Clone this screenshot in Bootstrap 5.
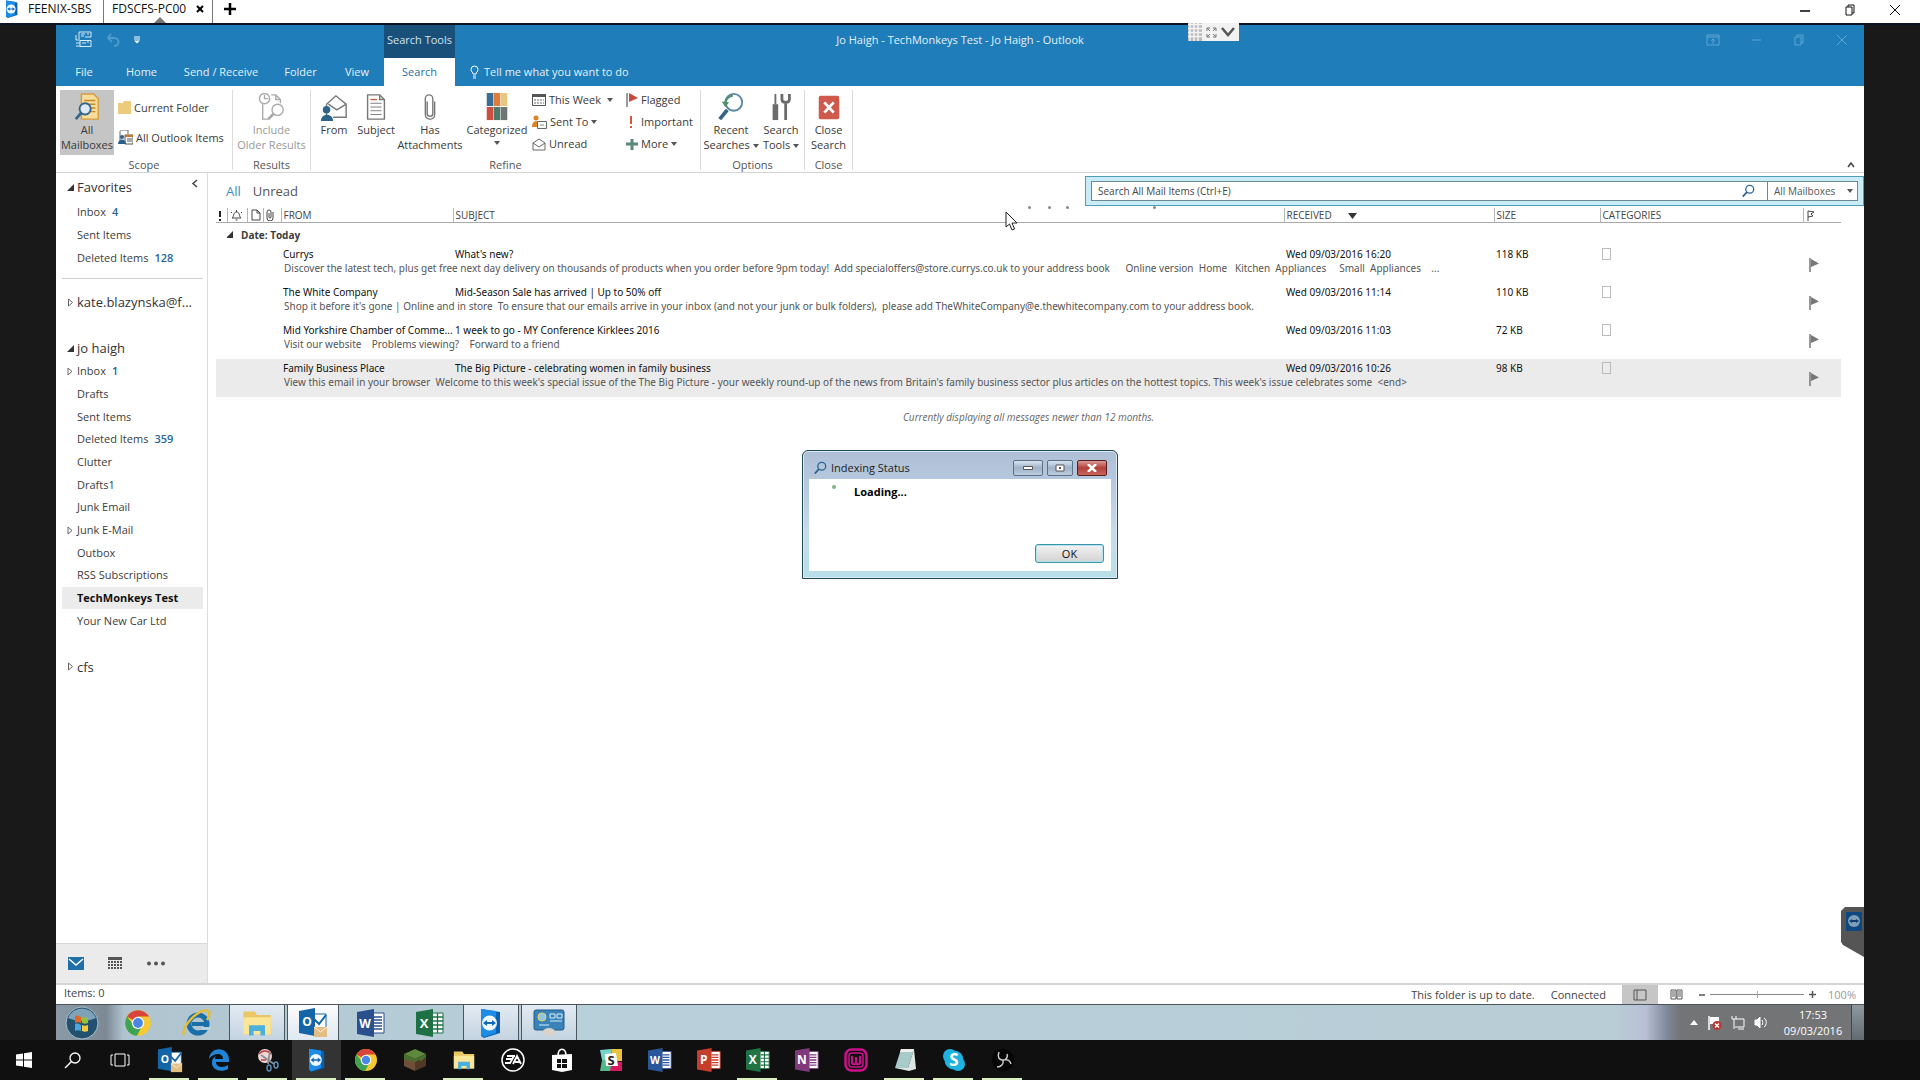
<!DOCTYPE html>
<html lang="en">
<head>
<meta charset="utf-8">
<meta name="viewport" content="width=device-width, initial-scale=1">
<title>Jo Haigh - TechMonkeys Test - Jo Haigh - Outlook</title>
<link href="https://cdn.jsdelivr.net/npm/bootstrap@5.3.0/dist/css/bootstrap.min.css" rel="stylesheet">
<script src="https://cdn.jsdelivr.net/npm/bootstrap@5.3.0/dist/js/bootstrap.bundle.min.js"></script>
<style>
:root{--ol:#1f7db9;--ink:#3c3c3c;--line:#d4d4d4}
body{font-family:"Open Sans","Noto Sans",sans-serif;font-size:11px;line-height:14px;color:var(--ink);background:#191919}
button,input,select{font:inherit;color:inherit}
button{background:none;border:0;padding:0}
a{color:inherit;text-decoration:none}
svg{display:block;flex:none}
.shell{min-height:100vh}
.tv-bar{height:23px;background:#fff;color:#111;font-size:12px}
.tv-bar .sess{height:23px;padding-bottom:5px}
.sess-a{width:103px}
.sess-b{width:110px;border-left:1px solid #777;border-right:1px solid #777}
.sess-b::after{content:"";position:absolute;left:50px;bottom:0;border:6px solid transparent;border-top:0;border-bottom-color:#777}
.tv-add{width:34px;height:23px;padding-bottom:5px}
.tv-win{gap:32px;padding:0 19px 3px 0}
.stage{padding:0 56px;border-top:2px solid #0c1324}
.tv-handle{left:1188px;top:23px;width:51px;height:18px;background:#f2f2f2;z-index:5}
.ol-head{background:var(--ol);color:#e4f1fa}
.ol-title{height:33px}
.side-l,.side-r{flex:1 1 0}
.ctx{width:71px;background:#195079;color:#cfe4f4}
.qat{width:328px;padding-left:19px;gap:14px}
.ol-ctl{gap:30px;color:#5fa5d2}
.ol-ctl button:last-child{margin-right:16px}
.tabs{height:28px}
.tabs a{display:flex;align-items:center;justify-content:center;height:28px}
.t-s{width:56px}.t-m{width:59px}.t-l{width:100px}.t-on{width:71px;background:#fff;color:#1f6fa8}
.t-v{width:54px}
.tell{padding-left:15px;gap:5px}
.rib{height:87px;border-bottom:1px solid var(--line);background:#fff;color:#3a3a3a}
.grp{margin:4px 0;border-right:1px solid #dcdcdc;height:80px}
.grp-cap{height:14px;line-height:14px;text-align:center;color:#555;margin-bottom:-2px}
.big{display:flex;flex-direction:column;align-items:center;height:65px;padding-top:3px;line-height:15px;text-align:center;white-space:nowrap}
.big svg{margin-bottom:1px}
.big.on{background:#c5c5c5}
.sm{display:flex;align-items:center;gap:3px;white-space:nowrap}
.side{width:152px;flex:none;border-right:1px solid #dcdcdc;padding:0 0 0 6px}
.fold-h{font-size:13px;line-height:20px;gap:3px;padding-left:5px;color:#333}
.fold-list{display:flex;flex-direction:column;margin:0;padding:0;list-style:none}
.fold-list li{flex:1 1 0;display:flex;align-items:center}
.fold-list a{display:flex;align-items:center;flex:1;padding-left:15px;height:100%}
.fold-list .tw + a{padding-left:3px}
.tw{width:12px;padding-left:5px;flex:none}
.cnt{color:#2b6496;font-weight:600;margin-left:6px}
.on-row{background:#ebebeb;margin-right:4px;font-weight:700;color:#111}
.fav3{height:68px}.jo12{height:272px}
.mods{height:40px;margin-left:-6px;border-top:1px solid #d8d8d8;background:#ebebeb;padding-left:12px}
.filt{font-size:13px;color:#555;height:35px;padding-left:18px;gap:12px}
.sbox{width:779px;height:30px;margin-top:3px;background:#c9ecf9;border:1px solid #4f9dbb;padding:4px 5px;flex:none}
.sbox-in{background:#fff;border:1px solid #6f8793;height:20px;font-size:10px}
.sbox input{border:0;outline:0;background:none;flex:1;padding:0 6px;min-width:0}
.sbox input::placeholder{color:#444;opacity:1}
.sbox select{appearance:none;border:0;border-left:1px solid #6f8793;width:90px;padding:0 0 0 6px;background:none;height:18px;color:#555;outline:0}
.mails{table-layout:fixed;width:100%;border-collapse:collapse;font-family:"Noto Sans","Open Sans",sans-serif;font-size:10px;line-height:14px}
.mails th{font-weight:400;height:14px;padding:0 0 0 2px;color:#444;font-family:"Open Sans",sans-serif}
.mails thead tr{border-bottom:1px solid #a9a9a9;height:13px}
.mails th.sp{border-left:1px solid #b5b5b5}
.mails td{padding:0 0 0 2px;white-space:nowrap;overflow:hidden}
.mails .l1 td{height:16px;padding-top:2px;color:#111}
.mails .l2 td{height:22px;padding-bottom:8px;white-space:pre;color:#555;padding-left:3px}
.pick{background:#ebebeb}
.grp-row td{height:22px;padding-top:2px;font-weight:700;font-family:"Open Sans",sans-serif}
.cbx{width:9px;height:12px;border:1px solid #bbb;display:block}
.note{font-size:10px;color:#666;padding-top:5px}
.stat{height:21px;border-top:2px solid #d5d5d5;color:#444;font-size:11px}
.zoomr{appearance:none;width:94px;height:12px;margin:0 5px;background:linear-gradient(#888,#888) center/100% 1px no-repeat,linear-gradient(#aaa,#aaa) center/1px 6px no-repeat}
.zoomr::-webkit-slider-thumb{appearance:none;width:1px;height:7px;background:#aaa}
.w7{height:36px;border-top:1px solid #4c555b;background:linear-gradient(90deg,#8b9aa6 0,#7d8a96 50px,#b0c4cf 68px,#b8d0da 500px,#b8cdd6 1560px,#b8bfd6 1590px,#7d8697 1612px,#737476 1624px)}
.w7 button{width:59px;height:35px;display:flex;align-items:center;justify-content:center}
.w7 .open{width:56px;border:1px solid #4c555b;border-width:0 1px;background:linear-gradient(#e3ebf3,#c3d3e0);margin-right:2px}
.w7 .act{background:linear-gradient(#fbfcfe,#dfe8f0)}
.w7 .ie{margin-right:3px}
.tray{color:#fff;gap:9px}
.clock{width:72px;line-height:16px;text-align:center;font-size:11px;margin-right:-7px}
.w7 .peek{width:13px;height:35px;border-left:1px solid #444;background:linear-gradient(#8d98a0,#626a70)}
.w10{height:40px;background:#101010}
.w10 button{width:49px;height:40px;display:flex;align-items:center;justify-content:center;position:relative}
.w10 .sys{width:48px}
.w10 .sys.last{margin-right:1px}
.w10 .run::after{content:"";position:absolute;left:4px;right:5px;bottom:0;height:2px;background:#dcefc0}
.w10 .cur{background:#333}
.dlg{left:50%;top:277px;width:316px;height:129px;margin-left:-158px;border:1px solid #1f4a55;border-radius:6px 6px 0 0;background:linear-gradient(#aebfd6,#b8cbe0 40px,#c6dbe9 80px,#b8dfe8);box-shadow:inset 0 0 0 1px #dcebf5;padding:0 6px 7px}
.dlg-bar{height:28px;padding:6px 0 0 4px;font-size:11px;color:#1d1d1d;gap:4px}
.dlg-bar button{width:30px;height:16px;border:1px solid #5c6f86;border-radius:2px;background:linear-gradient(#d6e2ef,#9fb2c8 50%,#bccddd);display:flex;align-items:center;justify-content:center}
.dlg-bar .x{background:linear-gradient(#d99b95,#b3403a 50%,#c9655b);border-color:#5a1d1d}
.dlg-in{background:#fff;flex:1;padding:6px 7px 8px 23px}
.okb{width:69px;height:19px;border:1px solid #3a94a8;border-radius:3px;background:linear-gradient(#f3f3f3,#e2e2e2 50%,#d3d3d3);box-shadow:inset 0 0 0 1px #b5e3ee;color:#111}
.spin-dot{width:3px;height:3px;border-radius:50%;background:#888;position:absolute;top:33px}
.ptr{position:absolute;left:949px;top:38px}
.tv-tab{right:0;bottom:26px}
</style>
</head>
<body>
<svg width="0" height="0" class="position-absolute">
<defs>
<symbol id="tv" viewBox="0 0 24 30"><path d="M2 1l19 3v21l-16 5-3-2z" fill="#0b5fb0"/><path d="M2 1l15 2v22L5 29l-3-2z" fill="#1c8ce6"/><circle cx="10.500" cy="15" r="7.500" fill="#eef8ff"/><path d="M4 15l4-3v2h5v-2l4 3-4 3v-2H8v2z" fill="#1368b8"/></symbol>
<symbol id="chrome" viewBox="0 0 24 24"><circle cx="12" cy="12" r="11" fill="#f5c92f"/><path d="M12 12L2.500 6.500A11 11 0 0 1 21.500 6.500H12z" fill="#d8443a"/><path d="M2.500 6.500A11 11 0 0 0 11 23l5-9-8-.500z" fill="#3ea352"/><circle cx="12" cy="12" r="5.300" fill="#fff"/><circle cx="12" cy="12" r="4.200" fill="#4a86e8"/></symbol>
<symbol id="folder" viewBox="0 0 28 26"><path d="M2 3h10l2 3h12v17H2z" fill="#e9c766"/><path d="M4 8h22v15H2V8z" fill="#fbe596"/><path d="M7 24v-9h14v9h-4v-4h-6v4z" fill="#4bb0de"/></symbol>
<symbol id="outl" viewBox="0 0 28 30"><path d="M13 6h14v15H13z" fill="#fff" stroke="#1565a5"/><path d="M15 11l5 5 7-9" fill="none" stroke="#1565a5" stroke-width="2"/><path d="M0 3l16-3v28L0 25z" fill="#1464a8"/><text x="8" y="18" font-size="12" font-weight="700" text-anchor="middle" fill="#fff">O</text><path d="M15 19h13v10H15z" fill="#e4bd84"/><path d="M15 19l6.500 5 6.500-5" fill="none" stroke="#fff3dc"/></symbol>
<symbol id="page" viewBox="0 0 28 28"><path d="M12 4h15v20H12z" fill="#fff" stroke="currentColor"/><path d="M17 8h8M17 11h8M17 14h8M17 17h8M17 20h8" stroke="currentColor" stroke-width="1.500"/><path d="M0 3l17-3v28L0 25z" fill="currentColor"/></symbol>
<symbol id="sheet" viewBox="0 0 28 28"><path d="M12 4h15v20H12z" fill="#fff" stroke="currentColor"/><path d="M17 8h10M17 12h10M17 16h10M17 20h10M21.500 4v20" stroke="currentColor" stroke-width="1.300"/><path d="M0 3l17-3v28L0 25z" fill="currentColor"/></symbol>
<symbol id="lens" viewBox="0 0 16 16"><circle cx="10" cy="6" r="4.500" fill="none" stroke="currentColor" stroke-width="1.500"/><path d="M7 9l-5 5.500" stroke="currentColor" stroke-width="2"/></symbol>
<symbol id="dn" viewBox="0 0 6 4"><path d="M0 0h6L3 4z" fill="#555"/></symbol>
<symbol id="op" viewBox="0 0 7 7"><path d="M7 0v7H0z" fill="#333"/></symbol>
<symbol id="cl" viewBox="0 0 6 9"><path d="M1 1l4 3.500L1 8z" fill="none" stroke="#666"/></symbol>
<symbol id="flag" viewBox="0 0 10 14"><path d="M1 0v14" stroke="#777" stroke-width="1.500"/><path d="M2 1l8 4.500L2 9z" fill="#777"/></symbol>
<symbol id="rest" viewBox="0 0 12 12"><path d="M2 3h6v8H2zM4 3V1h6v8H8" fill="none" stroke="currentColor"/></symbol>
<symbol id="xx" viewBox="0 0 12 12"><path d="M1 1l10 10M11 1L1 11" stroke="currentColor"/></symbol>
</defs></svg>
<div class="shell d-flex flex-column position-relative">
<header class="tv-bar d-flex justify-content-between">
 <div class="d-flex">
  <a href="#" class="sess sess-a d-flex align-items-center ps-1 gap-2"><svg width="16" height="18"><use href="#tv"/></svg><span class="text-nowrap">FEENIX-SBS</span></a>
  <div class="sess sess-b d-flex align-items-center justify-content-between px-2 position-relative"><a href="#" class="text-nowrap">FDSCFS-PC00</a><button aria-label="Close session"><svg width="8" height="8" viewBox="0 0 8 8"><path d="M1 1l6 6M7 1L1 7" stroke="#000" stroke-width="2"/></svg></button></div>
  <button class="tv-add d-flex align-items-center justify-content-center" aria-label="New session"><svg width="12" height="12" viewBox="0 0 12 12"><path d="M6 0v12M0 6h12" stroke="#000" stroke-width="2.500"/></svg></button>
 </div>
 <div class="tv-win d-flex align-items-center">
  <button aria-label="Minimise"><svg width="12" height="12"><path d="M1 7h10" stroke="#000" stroke-width="1.500"/></svg></button>
  <button aria-label="Restore"><svg width="14" height="12"><use href="#rest"/></svg></button>
  <button aria-label="Close"><svg width="12" height="12"><use href="#xx"/></svg></button>
 </div>
</header>
<div class="tv-handle position-absolute d-flex align-items-center gap-1">
 <svg width="14" height="18"><path d="M0 0h14v18H0z" fill="#bbb"/><path d="M0 1.500h14M0 5.500h14M0 9.500h14M0 13.500h14M2 0v18M6 0v18M10 0v18" stroke="#f4f4f4" stroke-width="1.500"/></svg>
 <svg width="11" height="11"><path d="M4 4L1 1h3M1 1v3M7 4l3-3H7M10 1v3M4 7l-3 3h3M1 10V7M7 7l3 3H7M10 10V7" fill="none" stroke="#777"/></svg>
 <svg width="14" height="10"><path d="M1 1l6 7 6-7" fill="none" stroke="#555" stroke-width="2.500"/></svg>
</div>
<main class="stage flex-grow-1 d-flex flex-column">
 <div class="ol-head">
  <div class="ol-title d-flex">
   <div class="side-l d-flex">
    <div class="qat d-flex align-items-center pb-1">
     <button aria-label="Send and receive"><svg width="17" height="17" fill="none" stroke="#d9ebf7"><path d="M4 8V1h12v5h-6M1 4v5h4M5 9.500h11v6H5zM1 12h4M1 15h4M6 3h4M6 5h3M12 3h2M7 12h4M12 11h2"/></svg></button>
     <button aria-label="Undo"><svg width="14" height="14" fill="none" stroke="#4f9bcd" stroke-width="2"><path d="M5 1L2 5l4 4M2 5h6c6 0 6 8 0 8"/></svg></button>
     <button aria-label="Customise toolbar"><svg width="6" height="8"><path d="M0 1h6M0 3h6" stroke="#fff"/><path d="M0 4.500h6l-3 3z" fill="#fff"/></svg></button>
    </div>
    <div class="ctx d-flex align-items-center justify-content-center text-nowrap pb-1">Search Tools</div>
   </div>
   <div class="d-flex align-items-center pb-1">Jo Haigh - TechMonkeys Test - Jo Haigh - Outlook</div>
   <div class="side-r ol-ctl d-flex align-items-center justify-content-end pb-1">
    <button aria-label="Ribbon options"><svg width="14" height="12" fill="none" stroke="currentColor"><path d="M1 1h12v10H1zM1 3h12M7 10V5M5 7l2-2 2 2"/></svg></button>
    <button aria-label="Minimise"><svg width="12" height="12"><path d="M2 6h9" stroke="currentColor"/></svg></button>
    <button aria-label="Restore"><svg width="14" height="12"><use href="#rest"/></svg></button>
    <button aria-label="Close"><svg width="12" height="12"><use href="#xx"/></svg></button>
   </div>
  </div>
  <nav class="tabs d-flex">
   <a href="#" class="t-s">File</a><a href="#" class="t-m">Home</a><a href="#" class="t-l">Send / Receive</a><a href="#" class="t-m">Folder</a><a href="#" class="t-v">View</a><a href="#" class="t-on">Search</a>
   <a href="#" class="tell"><svg width="9" height="14" fill="none" stroke="#fff"><path d="M3 9c0-2-2-2-2-4.500a3.500 3.500 0 0 1 7 0C8 7 6 7 6 9zM3 11h3M3 13h3"/></svg>Tell me what you want to do</a>
  </nav>
 </div>
 <div class="rib d-flex">
  <div class="grp d-flex flex-column justify-content-between" style="width:177px">
   <div class="d-flex ps-1">
    <button class="big on" style="width:54px"><svg width="28" height="28" viewBox="0 0 28 30"><path d="M8 1h13l5 5v22H8z" fill="#f6dd9c" stroke="#d79b3c" stroke-width="1.500"/><path d="M11 8h12M11 12h12M17 16h6M17 20h6" stroke="#c98a2a" stroke-width="1.500"/><circle cx="12" cy="17" r="6" fill="#dcebf5" stroke="#33658c" stroke-width="2"/><path d="M8 21l-6 7" stroke="#33658c" stroke-width="3"/></svg>All<br>Mailboxes</button>
    <div class="ps-1 d-flex flex-column" style="gap:15px;padding-top:11px">
     <button class="sm"><svg width="13" height="14"><path d="M0 2h5l1 -2h7v13H0z" fill="#eccb7d"/></svg>Current Folder</button>
     <button class="sm"><svg width="15" height="15" viewBox="0 0 15 15"><path d="M2 0h8v4M2 1v13" fill="none" stroke="#666"/><path d="M7 5h8v9H7z" fill="#fff" stroke="#555"/><path d="M7 5h8v2H7z" fill="#d2772a"/><path d="M9 9h5M9 11h5" stroke="#555"/><circle cx="4" cy="7" r="2" fill="#2b5f8a"/><path d="M0 14c0-6 8-6 8 0z" fill="#2b5f8a"/></svg>All Outlook Items</button>
    </div>
   </div>
   <div class="grp-cap">Scope</div>
  </div>
  <div class="grp d-flex flex-column justify-content-between" style="width:78px">
   <button class="big w-100" style="color:#999"><svg width="30" height="28" viewBox="0 0 30 30" fill="none" stroke="#aaa" stroke-width="1.500"><path d="M5 12v16h7M14 2h5l5 5v4M19 2v5h5"/><circle cx="7" cy="6" r="5.500" fill="#fff"/><path d="M7 2v4h4"/><circle cx="21" cy="18" r="6"/><path d="M17 22l-6 6" stroke-width="3"/></svg>Include<br>Older Results</button>
   <div class="grp-cap">Results</div>
  </div>
  <div class="grp d-flex flex-column justify-content-between" style="width:390px">
   <div class="d-flex">
    <button class="big" style="width:46px"><svg width="28" height="28" viewBox="0 0 28 30"><path d="M6 26V12l10-9 11 9v14H13M8 12l9 6 10-6" fill="none" stroke="#777" stroke-width="1.500"/><circle cx="6" cy="18" r="4" fill="#2f6489"/><path d="M0 30c0-9 13-9 13 0z" fill="#2f6489"/></svg>From</button>
    <button class="big" style="width:38px"><svg width="22" height="28" viewBox="0 0 22 30" fill="none" stroke="#777" stroke-width="1.500"><path d="M2 2h13l5 5v21H2zM15 2v5h5"/><path d="M5 7h7" stroke="#cc5c49"/><path d="M5 11h12M5 15h12M5 19h12M5 23h12" stroke-width="1"/></svg>Subject</button>
    <button class="big" style="width:70px"><svg width="12" height="28" viewBox="0 0 12 30" fill="none" stroke="#777" stroke-width="1.500"><path d="M3 9v13a3 3 0 0 0 6 0V6a4 4 0 0 0-8 0v17a5 5 0 0 0 10 0V9"/></svg>Has<br>Attachments</button>
    <button class="big" style="width:64px"><svg width="24" height="28" viewBox="0 0 24 30"><path d="M1 0h7v14H1z" fill="#396f94"/><path d="M8.500 0h7v14h-7z" fill="#e07b39"/><path d="M16 0h7v14h-7z" fill="#e8c67e"/><path d="M1 15h7v14H1z" fill="#cc4f42"/><path d="M8.500 15h7v14h-7z" fill="#4f7a6b"/><path d="M16 15h7v14h-7z" fill="#6c7674"/></svg>Categorized<svg width="6" height="4" class="mt-1"><use href="#dn"/></svg></button>
    <div class="d-flex flex-column" style="width:97px;gap:8px;padding:3px 13px 0 3px">
     <button class="sm"><svg width="14" height="12"><path d="M.500.500h13v11H.500z" fill="#fff" stroke="#555"/><path d="M0 0h14v3H0z" fill="#555"/><path d="M2 6h10M2 9h10" stroke="#666" stroke-dasharray="2 1"/></svg>This Week<svg width="6" height="4" class="ms-auto"><use href="#dn"/></svg></button>
     <button class="sm"><svg width="15" height="14"><circle cx="4" cy="3" r="2.500" fill="#e08122"/><path d="M0 12c0-7 5-6 8-5v5z" fill="#e08122"/><path d="M5.500 6.500h9v7h-9z" fill="#fff" stroke="#666"/><path d="M8 10h4" stroke="#888"/></svg>Sent To<svg width="6" height="4"><use href="#dn"/></svg></button>
     <button class="sm"><svg width="14" height="13" fill="none" stroke="#666"><path d="M1 5l6-4 6 4v7H1zM1 5l6 4 6-4"/></svg>Unread</button>
    </div>
    <div class="d-flex flex-column" style="gap:8px;padding-top:3px">
     <button class="sm"><svg width="12" height="14"><path d="M1 0v14" stroke="#777" stroke-width="1.500"/><path d="M3 0l9 5-9 4z" fill="#c9473f"/></svg>Flagged</button>
     <button class="sm"><svg width="12" height="14"><path d="M5 1v8M5 11v2" stroke="#dc5340" stroke-width="2"/></svg>Important</button>
     <button class="sm"><svg width="12" height="12"><path d="M6 1v11M0 6h12" stroke="#5a8579" stroke-width="3"/></svg>More<svg width="6" height="4"><use href="#dn"/></svg></button>
    </div>
   </div>
   <div class="grp-cap">Refine</div>
  </div>
  <div class="grp d-flex flex-column justify-content-between" style="width:104px">
   <div class="d-flex">
    <button class="big" style="width:60px"><svg width="26" height="28" viewBox="0 0 26 30" fill="none"><circle cx="16" cy="10" r="9" stroke="#5c86a5" stroke-width="2"/><path d="M7 14c-1-6 3-11 8-11" stroke="#4f8f6c" stroke-width="2"/><path d="M3 9l4 6 4-5z" fill="#4f8f6c"/><path d="M9 18l-8 10" stroke="#33658c" stroke-width="4"/></svg><span>Recent<br>Searches <svg width="6" height="4" class="d-inline-block align-middle"><use href="#dn"/></svg></span></button>
    <button class="big" style="width:40px"><svg width="22" height="28" viewBox="0 0 22 30" fill="none" stroke="#6b6b6b"><path d="M5 1v11" stroke-width="2"/><path d="M5 12v17" stroke-width="6"/><path d="M12 1v6c0 4 8 4 8 0V1M16 9v20" stroke-width="3"/></svg><span>Search<br>Tools <svg width="6" height="4" class="d-inline-block align-middle"><use href="#dn"/></svg></span></button>
   </div>
   <div class="grp-cap">Options</div>
  </div>
  <div class="grp d-flex flex-column justify-content-between" style="width:48px">
   <button class="big w-100"><svg width="24" height="28" viewBox="0 0 24 30"><rect x="1" y="3" width="22" height="25" rx="2" fill="#cf5a4b"/><path d="M7 10l10 11M17 10L7 21" stroke="#fff" stroke-width="3"/></svg>Close<br>Search</button>
   <div class="grp-cap">Close</div>
  </div>
  <button class="ms-auto align-self-end pb-1 me-2" aria-label="Collapse ribbon"><svg width="10" height="7"><path d="M2 6l3-4 3 4" fill="none" stroke="#444" stroke-width="1.500"/></svg></button>
 </div>
 <div class="flex-grow-1 d-flex bg-white position-relative">
  <aside class="side d-flex flex-column">
   <div class="fold-h d-flex align-items-center" style="height:28px"><svg width="7" height="7"><use href="#op"/></svg>Favorites<button class="ms-auto me-2 pb-2" aria-label="Collapse pane"><svg width="8" height="9"><path d="M6 1L2 4.500 6 8" fill="none" stroke="#444" stroke-width="1.500"/></svg></button></div>
   <ul class="fold-list fav3"><li><a href="#">Inbox<span class="cnt">4</span></a></li><li><a href="#">Sent Items</a></li><li><a href="#">Deleted Items<span class="cnt">128</span></a></li></ul>
   <hr class="m-0 me-1" style="margin-top:9px!important">
   <div class="fold-h d-flex align-items-center" style="height:46px"><svg width="7" height="9"><use href="#cl"/></svg>kate.blazynska@f...</div>
   <div class="fold-h d-flex align-items-center" style="height:46px"><svg width="7" height="7"><use href="#op"/></svg>jo haigh</div>
   <ul class="fold-list jo12" style="margin-top:-11px">
    <li><span class="tw"><svg width="6" height="9"><use href="#cl"/></svg></span><a href="#">Inbox<span class="cnt">1</span></a></li>
    <li><a href="#">Drafts</a></li><li><a href="#">Sent Items</a></li><li><a href="#">Deleted Items<span class="cnt">359</span></a></li><li><a href="#">Clutter</a></li><li><a href="#">Drafts1</a></li><li><a href="#">Junk Email</a></li>
    <li><span class="tw"><svg width="6" height="9"><use href="#cl"/></svg></span><a href="#">Junk E-Mail</a></li>
    <li><a href="#">Outbox</a></li><li><a href="#">RSS Subscriptions</a></li><li class="on-row"><a href="#">TechMonkeys Test</a></li><li><a href="#">Your New Car Ltd</a></li>
   </ul>
   <div class="fold-h d-flex align-items-center" style="height:69px"><svg width="7" height="9"><use href="#cl"/></svg>cfs</div>
   <div class="mods d-flex align-items-center mt-auto gap-4">
    <button aria-label="Mail"><svg width="16" height="13"><path d="M0 0h16v13H0z" fill="#1f6fa8"/><path d="M1 2l7 6 7-6" fill="none" stroke="#fff" stroke-width="1.500"/></svg></button>
    <button aria-label="Calendar"><svg width="14" height="13"><path d="M0 0h14v3H0z" fill="#555"/><path d="M0 5h14M0 8h14M0 11h14" stroke="#555" stroke-width="2" stroke-dasharray="2 1"/></svg></button>
    <button aria-label="More"><svg width="20" height="5" fill="#555"><circle cx="3" cy="2.500" r="2"/><circle cx="10" cy="2.500" r="2"/><circle cx="17" cy="2.500" r="2"/></svg></button>
   </div>
  </aside>
  <section class="flex-grow-1" style="min-width:0">
   <div class="d-flex justify-content-between">
    <div class="filt d-flex align-items-center"><a href="#" style="color:#3a8dc6">All</a><a href="#">Unread</a></div>
    <div class="sbox"><div class="sbox-in d-flex align-items-center">
     <input type="text" aria-label="Search mail" placeholder="Search All Mail Items (Ctrl+E)">
     <button aria-label="Search" class="me-2 pe-1" style="color:#2f6592"><svg width="14" height="14"><use href="#lens"/></svg></button>
     <span class="position-relative"><select aria-label="Search scope"><option>All Mailboxes</option></select><svg width="6" height="4" class="position-absolute" style="right:4px;top:7px"><use href="#dn"/></svg></span>
    </div></div>
   </div>
   <div style="padding:0 23px 0 8px">
   <table class="mails">
    <colgroup><col style="width:11px"><col style="width:20px"><col style="width:16px"><col style="width:18px"><col style="width:172px"><col><col style="width:210px"><col style="width:106px"><col style="width:203px"><col style="width:38px"></colgroup>
    <thead><tr>
     <th><svg width="4" height="11"><path d="M2 1v6M2 9v2" stroke="#222" stroke-width="2"/></svg></th>
     <th class="sp"><svg width="13" height="12" fill="none" stroke="#444"><path d="M2 9c2-1 1-6 4.500-6S9 8 11 9zM5.500 11h2M1 3l1 1M12 3l-1 1M6.500 1v2"/></svg></th>
     <th class="sp"><svg width="11" height="12" fill="none" stroke="#444"><path d="M2 1h5l3 3v7H2zM7 1v3h3"/></svg></th>
     <th class="sp"><svg width="8" height="12" fill="none" stroke="#444"><path d="M3 4v4a1 1 0 0 0 2 0V3a2 2 0 0 0-4 0v6a3 3 0 0 0 6 0V3"/></svg></th>
     <th class="sp">FROM</th><th class="sp">SUBJECT</th><th class="sp">RECEIVED<svg width="9" height="6" class="d-inline-block ms-3"><path d="M0 0h9L4.500 6z" fill="#333"/></svg></th><th class="sp">SIZE</th><th class="sp">CATEGORIES</th>
     <th class="sp"><svg width="9" height="11" fill="none" stroke="#444"><path d="M2 11V1l6 1-3 2 2 2-5 1"/></svg></th></tr></thead>
    <tbody><tr class="grp-row"><td></td><td colspan="9"><span class="d-flex align-items-center gap-2"><svg width="7" height="7" style="margin-left:-3px"><use href="#op"/></svg>Date: Today</span></td></tr></tbody>
    <tbody><tr class="l1"><td colspan="4"></td><td>Currys</td><td>What's new?</td><td>Wed 09/03/2016 16:20</td><td>118 KB</td><td><span class="cbx"></span></td><td rowspan="2"><svg width="10" height="14" class="ms-1"><use href="#flag"/></svg></td></tr>
    <tr class="l2"><td colspan="4"></td><td colspan="5">Discover the latest tech, plus get free next day delivery on thousands of products when you order before 9pm today!  Add specialoffers@store.currys.co.uk to your address book      Online version  Home   Kitchen  Appliances     Small  Appliances    ...</td></tr></tbody>
    <tbody><tr class="l1"><td colspan="4"></td><td>The White Company</td><td>Mid-Season Sale has arrived | Up to 50% off</td><td>Wed 09/03/2016 11:14</td><td>110 KB</td><td><span class="cbx"></span></td><td rowspan="2"><svg width="10" height="14" class="ms-1"><use href="#flag"/></svg></td></tr>
    <tr class="l2"><td colspan="4"></td><td colspan="5">Shop it before it's gone | Online and in store  To ensure that our emails arrive in your inbox (and not your junk or bulk folders),  please add TheWhiteCompany@e.thewhitecompany.com to your address book.</td></tr></tbody>
    <tbody><tr class="l1"><td colspan="4"></td><td>Mid Yorkshire Chamber of Comme...</td><td>1 week to go - MY Conference Kirklees 2016</td><td>Wed 09/03/2016 11:03</td><td>72 KB</td><td><span class="cbx"></span></td><td rowspan="2"><svg width="10" height="14" class="ms-1"><use href="#flag"/></svg></td></tr>
    <tr class="l2"><td colspan="4"></td><td colspan="5">Visit our website    Problems viewing?    Forward to a friend</td></tr></tbody>
    <tbody class="pick"><tr class="l1"><td colspan="4"></td><td>Family Business Place</td><td>The Big Picture - celebrating women in family business</td><td>Wed 09/03/2016 10:26</td><td>98 KB</td><td><span class="cbx"></span></td><td rowspan="2"><svg width="10" height="14" class="ms-1"><use href="#flag"/></svg></td></tr>
    <tr class="l2"><td colspan="4"></td><td colspan="5">View this email in your browser  Welcome to this week's special issue of the The Big Picture - your weekly round-up of the news from Britain's family business sector plus articles on the hottest topics. This week's issue celebrates some  &lt;end&gt;</td></tr></tbody>
   </table>
   <p class="note fst-italic text-center mb-0 mt-2">Currently displaying all messages newer than 12 months.</p>
   </div>
  </section>
  <i class="spin-dot" style="left:972px"></i><i class="spin-dot" style="left:992px"></i><i class="spin-dot" style="left:1010px"></i><i class="spin-dot" style="left:1097px"></i>
  <svg class="ptr" width="13" height="20" viewBox="0 0 13 20"><path d="M1 1v15l3.500-3 2.500 6 2.500-1L7 12h5z" fill="#fff" stroke="#222"/></svg>
  <div class="dlg position-absolute d-flex flex-column" role="dialog" aria-label="Indexing Status">
   <div class="dlg-bar d-flex align-items-center"><svg width="14" height="14" style="color:#2f6592"><use href="#lens"/></svg>Indexing Status
    <div class="d-flex ms-auto gap-1 me-1"><button aria-label="Minimise"><svg width="10" height="4"><path d="M.500.500h9v3h-9z" fill="#fff" stroke="#555"/></svg></button><button aria-label="Maximise" style="width:26px"><svg width="10" height="8"><path d="M1 1h8v6H1z" fill="#fff" stroke="#555"/><path d="M4 3h2v2H4z" fill="#555"/></svg></button><button class="x" aria-label="Close"><svg width="10" height="8"><path d="M1 0l8 8M9 0L1 8" stroke="#fff" stroke-width="2.500"/></svg></button></div>
   </div>
   <div class="dlg-in d-flex flex-column justify-content-between"><div class="d-flex fw-bold text-black"><svg width="22" height="5"><circle cx="2" cy="2" r="2" fill="#7fb585"/></svg>Loading...</div><button class="okb align-self-end">OK</button></div>
  </div>
  <button class="tv-tab position-absolute" aria-label="Session panel"><svg width="23" height="50" viewBox="0 0 23 50"><path d="M4 0h19v50L2 38l-2-3V4z" fill="#555"/><path d="M5 5h16v19H5z" fill="#0f4780"/><circle cx="13" cy="14" r="6" fill="#7f9fb8"/><path d="M8 14l3-2v1h4v-1l3 2-3 2v-1h-4v1z" fill="#0f3f70"/></svg></button>
 </div>
 <footer class="stat bg-white d-flex align-items-center justify-content-between">
  <span class="ps-2 ms-n1 pb-1">Items: 0</span>
  <div class="d-flex align-items-center pe-2">
   <span>This folder is up to date.</span><span class="ms-3 me-3">Connected</span>
   <button class="d-flex align-items-center justify-content-center" style="width:36px;height:19px;background:#c6c6c6" aria-label="Normal view"><svg width="14" height="12" fill="none" stroke="#555"><path d="M1 1h12v10H1zM4 1v10"/></svg></button>
   <button class="px-2 mx-1" aria-label="Reading view"><svg width="13" height="12" fill="none" stroke="#555"><path d="M1 1h5v9H1zM7 1h5v9H7zM2 3h3M2 5h3M2 7h3M8 3h3M8 5h3M8 7h3"/></svg></button>
   <button class="ms-1" aria-label="Zoom out"><svg width="6" height="6"><path d="M0 3h6" stroke="#555" stroke-width="1.500"/></svg></button><input type="range" class="zoomr" aria-label="Zoom"><button aria-label="Zoom in"><svg width="7" height="7"><path d="M0 3.500h7M3.500 0v7" stroke="#555" stroke-width="1.500"/></svg></button><span style="color:#999;margin-left:12px">100%</span>
  </div>
 </footer>
 <div class="w7 d-flex">
  <button style="width:52px" aria-label="Start"><svg width="34" height="34" viewBox="0 0 34 34"><circle cx="17" cy="17" r="16" fill="#24506f" stroke="#a5bfce"/><path d="M3 12a15 15 0 0 1 28 0c-9 4-19 4-28 0z" fill="#7ea3b8"/><path d="M10 10c3-1 4 0 6 1v6c-2-1-4-1-6 0z" fill="#e2692e"/><path d="M17 11c2 1 4 1 6 0v6c-2 1-4 1-6 0z" fill="#93c13f"/><path d="M10 18c3-1 4 0 6 1v6c-2-1-4-1-6 0z" fill="#4aa6df"/><path d="M17 19c2 1 4 1 6 0v6c-2 1-4 1-6 0z" fill="#f7ca3b"/></svg></button>
  <button aria-label="Chrome"><svg width="28" height="28"><use href="#chrome"/></svg></button>
  <button class="ie" aria-label="Internet Explorer"><svg width="32" height="30" viewBox="0 0 32 30"><circle cx="17" cy="16" r="9" fill="none" stroke="#1b6fa8" stroke-width="5"/><path d="M11 16h15" stroke="#1b6fa8" stroke-width="4"/><path d="M20 19h10v3H20z" fill="#b8d0da"/><path d="M3 27C-1 20 18-1 27 3c3 2 1 6-1 9" fill="none" stroke="#e2bd3b" stroke-width="2.500"/></svg></button>
  <button class="open" aria-label="Explorer"><svg width="32" height="30"><use href="#folder"/></svg></button>
  <button class="open act" style="width:52px" aria-label="Outlook"><svg width="30" height="30"><use href="#outl"/></svg></button>
  <button aria-label="Word" style="color:#2a4f8c"><svg width="28" height="28"><use href="#page"/><text x="8" y="19" font-size="12" font-weight="700" text-anchor="middle" fill="#fff">W</text></svg></button>
  <button class="me-1" aria-label="Excel" style="color:#1d7145"><svg width="28" height="28"><use href="#sheet"/><text x="8" y="19" font-size="13" font-weight="700" text-anchor="middle" fill="#fff">X</text></svg></button>
  <button class="open" aria-label="TeamViewer"><svg width="26" height="30"><use href="#tv"/></svg></button>
  <button class="open" aria-label="Control Panel"><svg width="32" height="28" viewBox="0 0 32 28"><rect x="1" y="1" width="30" height="20" rx="2" fill="#3a83b8" stroke="#1c5b8a"/><circle cx="9" cy="8" r="4" fill="#8fc7e6" stroke="#f0cf5a"/><path d="M17 5h5v4h-5zM24 5h5v4h-5zM17 12h12M6 16h10" stroke="#d7ecf8" fill="none"/><ellipse cx="16" cy="23" rx="6" ry="4" fill="#d8d4ca"/></svg></button>
  <div class="tray d-flex align-items-center ms-auto">
   <svg width="8" height="5"><path d="M4 0l4 5H0z" fill="#fff"/></svg>
   <svg width="15" height="16"><path d="M2 1v14" stroke="#fff" stroke-width="1.500"/><path d="M3 2h9v7H3z" fill="#fff"/><circle cx="10" cy="10.500" r="4.500" fill="#c1312e"/><path d="M8 8.500l4 4M12 8.500l-4 4" stroke="#fff" stroke-width="1.500"/></svg>
   <svg width="14" height="15" fill="none" stroke="#fff"><path d="M5 4h8v8H4M7 14h6M1 1v3h4V1M3 4v10"/></svg>
   <svg width="14" height="13" fill="none" stroke="#fff"><path d="M1 4h2l3-3v11L3 9H1z" fill="#fff"/><path d="M8 4c1 1 1 4 0 5M10 2c3 2 3 7 0 9"/></svg>
   <div class="clock">17:53<br>09/03/2016</div>
   <button class="peek" aria-label="Show desktop"></button>
  </div>
 </div>
</main>
<nav class="w10 d-flex">
 <button class="sys" aria-label="Start"><svg width="16" height="16" fill="#fff"><path d="M0 2.500L7 1.500V7.500H0zM8 1.300L16 0v7.500H8zM0 8.500h7v6L0 13.500zM8 8.500h8V16l-8-1.300z"/></svg></button>
 <button class="sys text-white" aria-label="Search"><svg width="17" height="17" viewBox="0 0 17 17"><circle cx="11" cy="6" r="5" fill="none" stroke="#fff" stroke-width="1.300"/><path d="M7.500 9.500L1 16" stroke="#fff" stroke-width="1.500"/></svg></button>
 <button class="sys last" aria-label="Task view"><svg width="20" height="14" fill="none" stroke="#fff"><path d="M5 1h10v12H5zM3 2H1v10h2M17 2h2v10h-2"/></svg></button>
 <button class="run" aria-label="Outlook"><svg width="26" height="26"><use href="#outl"/></svg></button>
 <button class="run" aria-label="Edge"><svg width="22" height="22" viewBox="0 0 22 22"><path d="M1 10C2-3 21-3 21 11v2H8c0 6 8 6 12 3v4C13 24 3 21 4 13c0-3 2-5 4-6-1 1-1 2-1 3h8C15 3 5 4 1 10z" fill="#2084d8"/></svg></button>
 <button class="run" aria-label="Snipping Tool"><svg width="24" height="24" viewBox="0 0 24 24"><circle cx="9" cy="8" r="7" fill="#f1d7d6"/><path d="M3 6c3-4 9-4 12 0M5 12h5" fill="none" stroke="#b94040" stroke-width="1.300"/><path d="M5 7l13 9M14 3l-2 13" stroke="#8a8f94" stroke-width="1.800"/><ellipse cx="20" cy="17" rx="2" ry="3" fill="none" stroke="#5d8fb8" stroke-width="1.500"/><ellipse cx="13" cy="20" rx="2" ry="3" fill="none" stroke="#5d8fb8" stroke-width="1.500"/></svg></button>
 <button class="run cur" aria-label="TeamViewer"><svg width="20" height="24"><use href="#tv"/></svg></button>
 <button class="run" aria-label="Chrome"><svg width="24" height="24"><use href="#chrome"/></svg></button>
 <button aria-label="Minecraft"><svg width="24" height="24" viewBox="0 0 24 24"><path d="M12 1l11 5-11 5L1 6z" fill="#5d8a3c"/><path d="M1 6l11 5v12L1 18z" fill="#70503a"/><path d="M23 6l-11 5v12l11-5z" fill="#523726"/><path d="M1 6l11 5v3L9 12l-2 2-3-3-3 1zM23 6l-11 5v3l4-2 2 1 5-4z" fill="#47702f"/></svg></button>
 <button class="run" aria-label="File Explorer"><svg width="24" height="22"><use href="#folder"/></svg></button>
 <button aria-label="EA"><svg width="24" height="24" viewBox="0 0 24 24" fill="none" stroke="#fff"><circle cx="12" cy="12" r="11" stroke-width="1.500"/><path d="M6 8h8M5 11h7M4 15h5l4-7M12 16l4-8 4 8M14 14h5" stroke-width="1.800"/></svg></button>
 <button aria-label="Store"><svg width="22" height="24" viewBox="0 0 22 24"><path d="M7 8c0-9 8-9 8 0" fill="none" stroke="#fff" stroke-width="1.500"/><path d="M1 7l20-1v16l-10 2-10-2z" fill="#fff"/><path d="M6 11h4v4H6zM11 11h5v4h-5zM6 16h4v4H6zM11 16h5v4h-5z" fill="#111"/></svg></button>
 <button aria-label="Slack"><svg width="22" height="22" viewBox="0 0 22 22"><path d="M0 1l11-1 2 11H2z" fill="#78d3c8"/><path d="M11 0h11v12h-9z" fill="#ecc23c"/><path d="M2 11h10l-1 11H0z" fill="#53b889"/><path d="M12 12l10 1v9H10z" fill="#d9195f"/><path d="M5 5l11-1 2 13H6z" fill="#fff"/><text x="11" y="16" font-size="13" font-weight="700" text-anchor="middle" fill="#222">S</text></svg></button>
 <button aria-label="Word" style="color:#2b579a"><svg width="24" height="24" viewBox="0 0 28 28"><use href="#page"/><text x="8" y="19" font-size="12" font-weight="700" text-anchor="middle" fill="#fff">W</text></svg></button>
 <button aria-label="PowerPoint" style="color:#c43e2b"><svg width="24" height="24" viewBox="0 0 28 28"><use href="#page"/><text x="8" y="19" font-size="14" font-weight="700" text-anchor="middle" fill="#fff">P</text></svg></button>
 <button class="run" aria-label="Excel" style="color:#217346"><svg width="24" height="24" viewBox="0 0 28 28"><use href="#sheet"/><text x="8" y="19" font-size="14" font-weight="700" text-anchor="middle" fill="#fff">X</text></svg></button>
 <button aria-label="OneNote" style="color:#80397b"><svg width="24" height="24" viewBox="0 0 28 28"><use href="#page"/><text x="8" y="19" font-size="14" font-weight="700" text-anchor="middle" fill="#fff">N</text></svg></button>
 <button aria-label="Wamp"><svg width="24" height="24" viewBox="0 0 24 24" fill="none" stroke="#c9128a"><rect x="1.500" y="1.500" width="21" height="21" rx="6" stroke-width="2.500"/><rect x="5" y="5" width="14" height="14" rx="3" stroke-width="1.500"/><path d="M8 8v6c0 3 4 3 4 0V9v5c0 3 4 3 4 0V8" stroke-width="2"/></svg></button>
 <button class="run" aria-label="Notepad"><svg width="24" height="24" viewBox="0 0 24 24"><path d="M8 1h13l-6 19H2z" fill="#a8cbc9"/><path d="M21 1l2 20-7 2-14-3h13z" fill="#dce6e4"/><path d="M8 1h13l-1 3H7z" fill="#eee"/></svg></button>
 <button class="run" aria-label="Skype"><svg width="24" height="24" viewBox="0 0 24 24"><circle cx="8" cy="8" r="7" fill="#1fb2e0"/><circle cx="16" cy="16" r="7" fill="#1fb2e0"/><circle cx="12" cy="12" r="9.500" fill="#1fb2e0"/><text x="12" y="18" font-size="17" font-weight="700" text-anchor="middle" fill="#fff">S</text></svg></button>
 <button class="run" aria-label="OBS"><svg width="24" height="24" viewBox="0 0 24 24"><circle cx="12" cy="12" r="11" fill="#050505"/><path d="M8 4c-2 5 0 8 4 8 4-1 7 0 8 4M12 12c1 4-2 7-6 7M14 12c2-2 3-4 2-6" fill="none" stroke="#ccc" stroke-width="1.500"/></svg></button>
</nav>
</div>
</body>
</html>
